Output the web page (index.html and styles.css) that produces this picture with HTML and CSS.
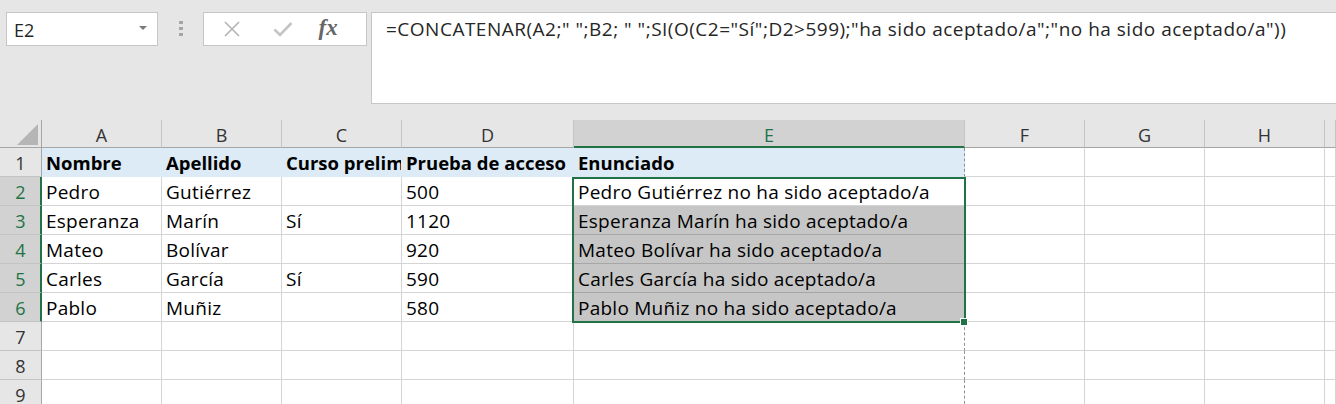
FILE: index.html
```html
<!DOCTYPE html>
<html lang="es">
<head>
<meta charset="utf-8">
<title>Excel</title>
<link rel="stylesheet" href="styles.css">
</head>
<body>
<div class="topbar">
  <div class="namebox">
    <span class="nb-text">E2</span>
    <span class="nb-arrow"></span>
  </div>
  <div class="grip"><i></i><i></i><i></i></div>
  <div class="btnbox">
    <span class="btn">
      <svg width="18" height="18" viewBox="0 0 18 18"><path d="M2 2 L16 16 M16 2 L2 16" stroke="#b3b3b3" stroke-width="1.6" fill="none"/></svg>
    </span>
    <span class="btn">
      <svg width="20" height="16" viewBox="0 0 20 16"><path d="M1.5 8.5 L7 14 L18.5 2" stroke="#c4c4c4" stroke-width="2.6" fill="none"/></svg>
    </span>
    <span class="btn fx">fx</span>
  </div>
  <div class="formula">=CONCATENAR(A2;" ";B2; " ";SI(O(C2="Sí";D2&gt;599);"ha sido aceptado/a";"no ha sido aceptado/a"))</div>
</div>

<div class="sheet">
  <div class="grid">
    <div class="hd corner"><span class="tri"></span></div>
    <div class="hd col">A</div>
    <div class="hd col">B</div>
    <div class="hd col">C</div>
    <div class="hd col">D</div>
    <div class="hd col col-sel">E</div>
    <div class="hd col">F</div>
    <div class="hd col">G</div>
    <div class="hd col">H</div>
    <div class="hd col"></div>

    <div class="rh">1</div>
    <div class="c blue b">Nombre</div>
    <div class="c blue b">Apellido</div>
    <div class="c blue b">Curso preliminar</div>
    <div class="c blue b">Prueba de acceso</div>
    <div class="c blue b pb">Enunciado</div>
    <div class="c"></div><div class="c"></div><div class="c"></div><div class="c"></div>

    <div class="rh rh-sel">2</div>
    <div class="c">Pedro</div>
    <div class="c">Gutiérrez</div>
    <div class="c"></div>
    <div class="c">500</div>
    <div class="c">Pedro Gutiérrez no ha sido aceptado/a</div>
    <div class="c"></div><div class="c"></div><div class="c"></div><div class="c"></div>

    <div class="rh rh-sel">3</div>
    <div class="c">Esperanza</div>
    <div class="c">Marín</div>
    <div class="c">Sí</div>
    <div class="c">1120</div>
    <div class="c sel">Esperanza Marín ha sido aceptado/a</div>
    <div class="c"></div><div class="c"></div><div class="c"></div><div class="c"></div>

    <div class="rh rh-sel">4</div>
    <div class="c">Mateo</div>
    <div class="c">Bolívar</div>
    <div class="c"></div>
    <div class="c">920</div>
    <div class="c sel">Mateo Bolívar ha sido aceptado/a</div>
    <div class="c"></div><div class="c"></div><div class="c"></div><div class="c"></div>

    <div class="rh rh-sel">5</div>
    <div class="c">Carles</div>
    <div class="c">García</div>
    <div class="c">Sí</div>
    <div class="c">590</div>
    <div class="c sel">Carles García ha sido aceptado/a</div>
    <div class="c"></div><div class="c"></div><div class="c"></div><div class="c"></div>

    <div class="rh rh-sel">6</div>
    <div class="c">Pablo</div>
    <div class="c">Muñiz</div>
    <div class="c"></div>
    <div class="c">580</div>
    <div class="c sel">Pablo Muñiz no ha sido aceptado/a</div>
    <div class="c"></div><div class="c"></div><div class="c"></div><div class="c"></div>

    <div class="rh">7</div>
    <div class="c"></div><div class="c"></div><div class="c"></div><div class="c"></div>
    <div class="c pb"></div>
    <div class="c"></div><div class="c"></div><div class="c"></div><div class="c"></div>

    <div class="rh">8</div>
    <div class="c"></div><div class="c"></div><div class="c"></div><div class="c"></div>
    <div class="c pb"></div>
    <div class="c"></div><div class="c"></div><div class="c"></div><div class="c"></div>

    <div class="rh">9</div>
    <div class="c"></div><div class="c"></div><div class="c"></div><div class="c"></div>
    <div class="c pb"></div>
    <div class="c"></div><div class="c"></div><div class="c"></div><div class="c"></div>
  </div>
  <div class="selection"></div>
  <div class="handle"></div>
</div>
</body>
</html>
```

FILE: styles.css
```css
* { box-sizing: border-box; }
html, body { margin: 0; padding: 0; }
body {
  background: #e6e6e6;
  font-family: "Open Sans", "Noto Sans", sans-serif;
  overflow: hidden;
  width: 1336px;
  height: 404px;
}

/* ---------- formula bar ---------- */
.topbar {
  display: flex;
  align-items: flex-start;
  height: 120px;
  padding: 12px 0 0 6px;
}
.namebox {
  width: 152px;
  height: 34px;
  background: #fff;
  border: 1px solid #c6c6c6;
  display: flex;
  align-items: center;
  justify-content: space-between;
  padding: 0 10px 0 7px;
}
.nb-text {
  font-size: 18px;
  color: #262626;
  line-height: 1;
  padding-top: 1px;
}
.nb-arrow {
  width: 0; height: 0;
  border-left: 4px solid transparent;
  border-right: 4px solid transparent;
  border-top: 4px solid #7a7a7a;
  margin-top: -2px;
}
.grip {
  width: 45px;
  height: 34px;
  display: flex;
  flex-direction: column;
  align-items: center;
  justify-content: center;
  gap: 3px;
  padding-bottom: 2px;
}
.grip i {
  display: block;
  width: 4px; height: 3px;
  background: #a6a6a6;
}
.btnbox {
  width: 164px;
  height: 34px;
  background: #fff;
  border: 1px solid #c6c6c6;
  display: flex;
  align-items: center;
  padding-left: 16px;
}
.btn {
  width: 54px;
  display: flex;
  align-items: center;
  justify-content: flex-start;
}
.btn svg { display: block; }
.btn:first-child { padding-left: 3px; }
.btn:nth-child(2) { padding-left: 4px; }
.fx {
  font-family: "Liberation Serif", "DejaVu Serif", serif;
  font-style: italic;
  font-weight: bold;
  font-size: 23px;
  color: #666;
  letter-spacing: 0;
  padding-left: 1px;
  padding-bottom: 2px;
}
.formula {
  flex: 1;
  margin-left: 4px;
  margin-right: -2px;
  height: 92px;
  background: #fff;
  border: 1px solid #c6c6c6;
  font-size: 19px;
  letter-spacing: 0.5px;
  color: #262626;
  padding: 5px 0 0 14px;
  white-space: nowrap;
  line-height: 23px;
}

/* ---------- sheet ---------- */
.sheet {
  position: relative;
  background: #fff;
}
.grid {
  display: grid;
  grid-template-columns: 42px 120px 120px 120px 172px 391px 120px 120px 120px 1fr;
  grid-template-rows: 28px repeat(9, 29px);
}
.hd {
  background: #e6e6e6;
  border-right: 1px solid #c4c4c4;
  border-bottom: 1px solid #a6a6a6;
  font-size: 18px;
  color: #333;
  text-align: center;
  line-height: 27px;
  padding-top: 2px;
}
.corner {
  position: relative;
  border-right: 1px solid #a6a6a6;
}
.tri {
  position: absolute;
  right: 3px;
  bottom: 2px;
  width: 0; height: 0;
  border-left: 21px solid transparent;
  border-bottom: 21px solid #b5b5b5;
}
.col-sel {
  background: #d2d2d2;
  color: #217346;
  border-bottom: 2px solid #217346;
}
.rh {
  background: #e6e6e6;
  border-right: 1px solid #a6a6a6;
  border-bottom: 1px solid #c4c4c4;
  font-size: 18px;
  color: #333;
  text-align: center;
  line-height: 28px;
  padding-top: 1px;
}
.rh-sel {
  background: #d2d2d2;
  color: #217346;
  border-right: 2px solid #217346;
  padding-left: 1px;
}
.c {
  border-right: 1px solid #d4d4d4;
  border-bottom: 1px solid #d4d4d4;
  font-size: 19px;
  letter-spacing: 0.25px;
  color: #000;
  line-height: 28px;
  padding-left: 4px;
  padding-top: 1px;
  white-space: nowrap;
  overflow: hidden;
}
.b { font-weight: bold; font-size: 18.5px; letter-spacing: 0; }
.blue {
  background: #ddebf7;
  border-right-color: #ddebf7;
  border-bottom-color: #ddebf7;
}
.sel {
  background: #c6c6c6;
  border-right-color: #c6c6c6;
  border-bottom-color: #a6a6a6;
}
.pb { border-right: 1px dashed #8f8f8f; }

.selection {
  position: absolute;
  left: 572px;
  top: 57px;
  width: 394px;
  height: 146px;
  border: 2px solid #217346;
  pointer-events: none;
}
.handle {
  position: absolute;
  left: 960px;
  top: 198px;
  width: 8px;
  height: 8px;
  background: #217346;
  border: 1px solid #fff;
}
```
